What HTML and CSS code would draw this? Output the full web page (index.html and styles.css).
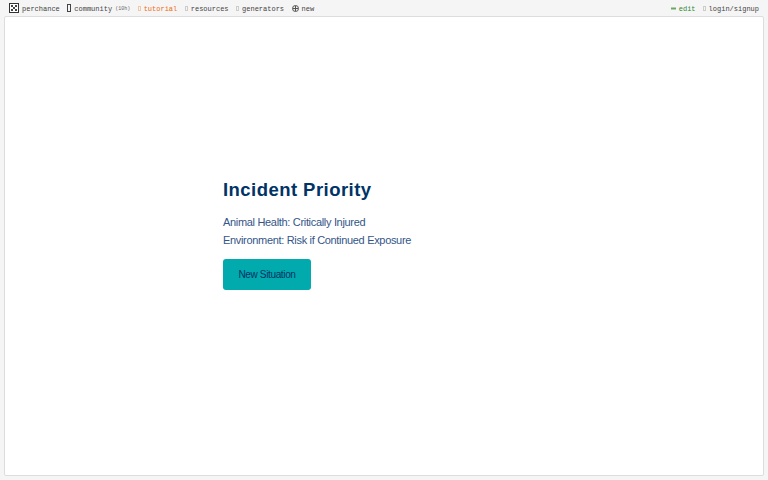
FILE: index.html
```html
<!DOCTYPE html>
<html lang="en">
<head>
<meta charset="utf-8">
<title>Incident Priority</title>
<link rel="stylesheet" href="styles.css">
</head>
<body>
<header class="topbar">
  <nav class="nav">
    <a class="item">
      <svg class="die" width="10" height="10" viewBox="0 0 10 10"><rect x=".5" y=".5" width="9" height="9" fill="#fff" stroke="#333"/><rect x="2" y="2" width="2" height="2" fill="#444"/><rect x="6" y="2" width="2" height="2" fill="#444"/><rect x="4" y="4" width="2" height="2" fill="#444"/><rect x="2" y="6" width="2" height="2" fill="#444"/><rect x="6" y="6" width="2" height="2" fill="#444"/></svg>
      <span>perchance</span>
    </a>
    <a class="item"><i class="tofu tofu-big"></i><span>community</span><small class="count">(10h)</small></a>
    <a class="item tutorial"><i class="tofu tofu-warm"></i><span>tutorial</span></a>
    <a class="item"><i class="tofu"></i><span>resources</span></a>
    <a class="item"><i class="tofu"></i><span>generators</span></a>
    <a class="item"><svg width="7" height="7" viewBox="0 0 7 7"><circle cx="3.5" cy="3.5" r="3" fill="none" stroke="#555"/><path d="M3.5 1v5M1 3.5h5" stroke="#555"/></svg><span>new</span></a>
  </nav>
  <nav class="nav nav-right">
    <a class="item edit"><svg width="5" height="3" viewBox="0 0 5 3"><path d="M0 1.5h5" stroke="#6a6" stroke-width="2"/></svg><span>edit</span></a>
    <a class="item"><i class="tofu"></i><span>login/signup</span></a>
  </nav>
</header>
<main class="frame">
  <section class="card">
    <h1>Incident Priority</h1>
    <p>Animal Health: Critically Injured</p>
    <p>Environment: Risk if Continued Exposure</p>
    <button type="button">New Situation</button>
  </section>
</main>
</body>
</html>
```
FILE: styles.css
```css
html, body { margin: 0; height: 100%; }
body {
  background: #f5f5f5;
  font-family: "Liberation Sans", Arial, sans-serif;
  display: flex;
  flex-direction: column;
  height: 480px;
  overflow: hidden;
}
.topbar {
  height: 16px;
  display: flex;
  justify-content: space-between;
  align-items: center;
  padding: 0 9px;
  font-family: "Liberation Mono", monospace;
  font-size: 7px;
  color: #444;
  flex: none;
}
.nav { display: flex; align-items: center; gap: 7.5px; }
.nav-right { gap: 7px; }
.item { display: flex; align-items: center; gap: 3px; white-space: nowrap; }
.item span { padding-top: 2px; }
.die { display: block; }
.tofu { display: block; width: 3px; height: 5px; border: 1px solid #ccc; box-sizing: border-box; margin-top: 1px; }
.tofu-big { width: 4px; height: 8px; border-color: #444; margin-top: -1px; }
.tofu-warm { border-color: #f2c9a8; }
.count { font-size: 5px; color: #666; padding-top: 2px; }
.tutorial { color: #ee6c14; }
.edit { color: #2a8a2a; }
.frame {
  flex: 1;
  margin: 0 4px 4px;
  background: #fff;
  border: 1px solid #ddd;
  border-radius: 2px;
  display: flex;
  flex-direction: column;
  justify-content: center;
  padding-left: 218px;
}
.card { color: #335588; padding-bottom: 23px; }
h1 {
  margin: 0 0 12px;
  font-size: 18.5px;
  line-height: 22px;
  letter-spacing: .45px;
  color: #003366;
}
p {
  margin: 0;
  font-size: 11px;
  line-height: 18px;
  letter-spacing: -.32px;
}
button {
  display: block;
  margin-top: 10px;
  width: 88px;
  height: 31px;
  padding: 0;
  border: 0;
  border-radius: 3px;
  background: #00aaad;
  color: #003366;
  font: 10px "Liberation Sans", Arial, sans-serif;
  letter-spacing: -.35px;
}
```
